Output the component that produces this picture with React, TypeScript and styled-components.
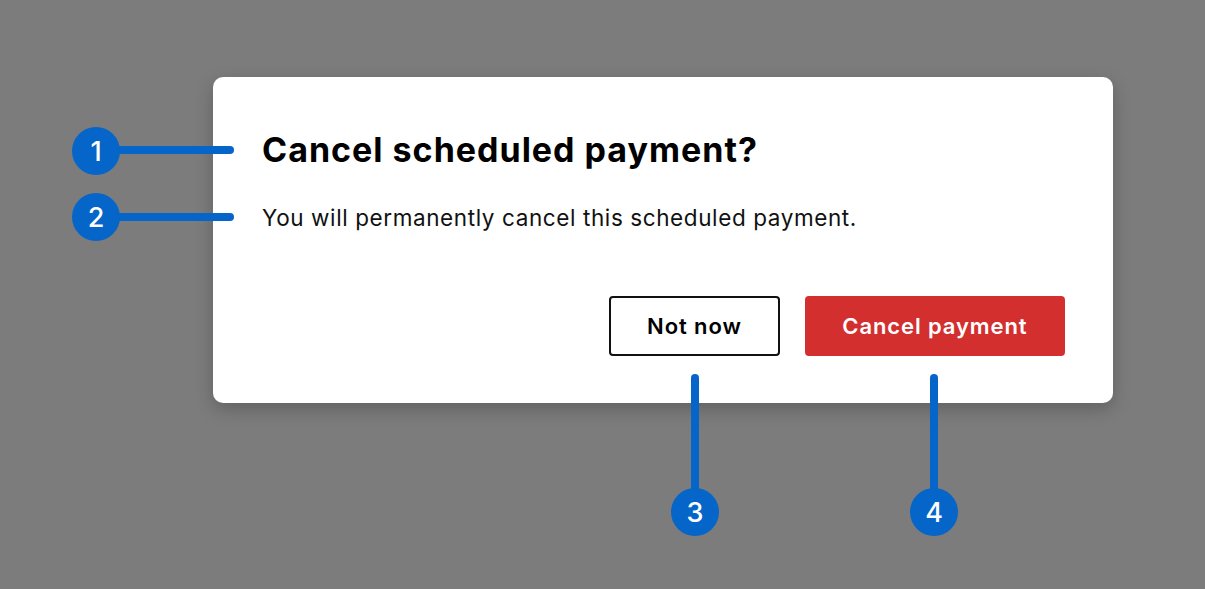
import React from 'react';
import styled, { createGlobalStyle } from 'styled-components';

const GlobalStyle = createGlobalStyle`
    html, body {
        margin: 0;
        padding: 0;
        background: #7b7c7b;
    }
    body {
        font-family: Inter, "Noto Sans", "Liberation Sans", sans-serif;
        -webkit-font-smoothing: antialiased;
    }
`

const BLUE = '#0565c8'

const Stage = styled.div`
    position: relative;
    width: 1205px;
    height: 589px;
    overflow: hidden;
    background: #7b7c7b;
    padding-top: 77px;
    padding-left: 213px;
    box-sizing: border-box;
`

const Dialog = styled.div`
    width: 900px;
    box-sizing: border-box;
    padding: 53px 48px 47px 49px;
    background: #ffffff;
    border-radius: 10px;
    box-shadow: 0 6px 18px rgba(0, 0, 0, 0.22);
    display: flex;
    flex-direction: column;
`

const Title = styled.h2`
    margin: 0;
    font-size: 34px;
    line-height: 40px;
    font-weight: 700;
    color: #000;
    letter-spacing: 1px;
`

const Body = styled.p`
    margin: 34px 0 0;
    font-size: 22.5px;
    line-height: 28px;
    font-weight: 400;
    color: #111;
    letter-spacing: 0.6px;
`

const Actions = styled.div`
    display: flex;
    justify-content: flex-end;
    gap: 25px;
    margin-top: 64px;
`

const ActionButton = styled.button<{ $primary?: boolean }>`
    height: 60px;
    box-sizing: border-box;
    padding: 0 ${p => p.$primary ? '35.5px' : '36px'};
    border-radius: 4px;
    border: 2.5px solid ${p => p.$primary ? '#d32f2f' : '#111'};
    background: ${p => p.$primary ? '#d32f2f' : '#fff'};
    color: ${p => p.$primary ? '#fff' : '#000'};
    font-family: inherit;
    font-size: 22px;
    font-weight: 600;
    letter-spacing: 0.9px;
    cursor: pointer;
`

const Badge = styled.div<{ $x: number, $y: number }>`
    position: absolute;
    left: ${p => p.$x - 24}px;
    top: ${p => p.$y - 24}px;
    width: 48px;
    height: 48px;
    border-radius: 50%;
    background: ${BLUE};
    color: #fff;
    display: flex;
    align-items: center;
    justify-content: center;
    font-size: 27px;
    font-weight: 500;
    z-index: 2;
`

const Leader = styled.div<{ $x: number, $y: number, $w: number, $h: number }>`
    position: absolute;
    left: ${p => p.$x}px;
    top: ${p => p.$y}px;
    width: ${p => p.$w}px;
    height: ${p => p.$h}px;
    border-radius: 4px;
    background: ${BLUE};
    z-index: 1;
`

const callouts = [
    { n: 1, x: 96, y: 151, line: { x: 100, y: 146, w: 134, h: 8 } },
    { n: 2, x: 96, y: 217, line: { x: 100, y: 213, w: 134, h: 8 } },
    { n: 3, x: 695, y: 512, line: { x: 691, y: 374, w: 8, h: 130 } },
    { n: 4, x: 934, y: 512, line: { x: 930, y: 374, w: 8, h: 130 } },
]

export default function App() {
    return (
        <>
            <GlobalStyle />
            <Stage>
                <Dialog>
                    <Title>Cancel scheduled payment?</Title>
                    <Body>You will permanently cancel this scheduled payment.</Body>
                    <Actions>
                        <ActionButton>Not now</ActionButton>
                        <ActionButton $primary>Cancel payment</ActionButton>
                    </Actions>
                </Dialog>
                {callouts.map(c => (
                    <React.Fragment key={c.n}>
                        <Leader $x={c.line.x} $y={c.line.y} $w={c.line.w} $h={c.line.h} />
                        <Badge $x={c.x} $y={c.y}>{c.n}</Badge>
                    </React.Fragment>
                ))}
            </Stage>
        </>
    )
}
